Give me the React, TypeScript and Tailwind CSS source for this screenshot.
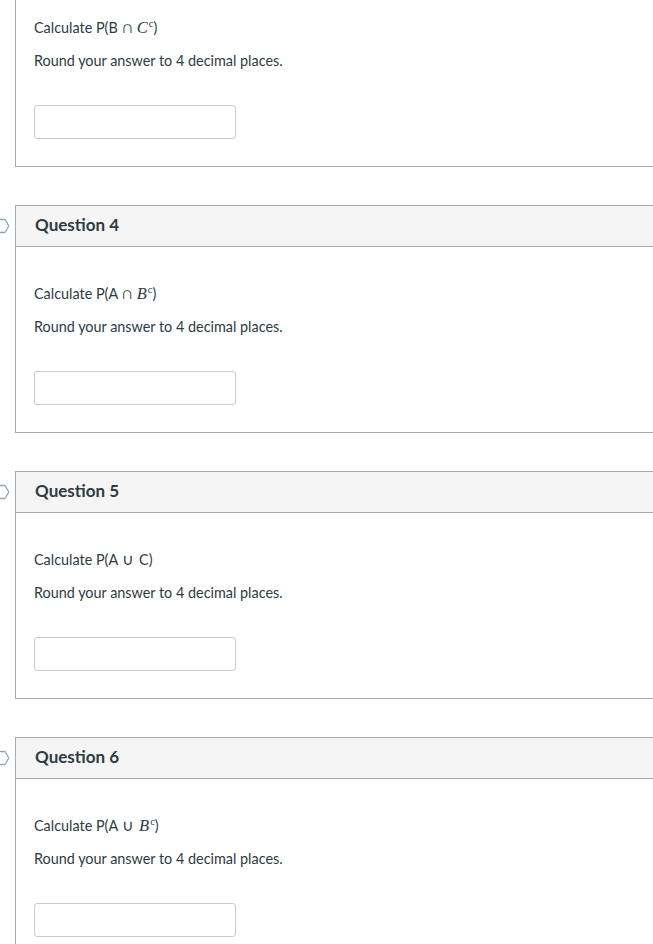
const questions = [
  { num: null, set: "B", op: "∩", sym: "C", sup: "c" },
  { num: 4, set: "A", op: "∩", sym: "B", sup: "c" },
  { num: 5, set: "A", op: "∪", sym: "C", sup: null },
  { num: 6, set: "A", op: "∪", sym: "B", sup: "c" },
];

function FlagIcon() {
  return (
    <svg
      className="absolute left-[-15px] top-[12px] h-[16px] w-[9px] overflow-visible"
      viewBox="0 0 9 16"
      fill="none"
    >
      <path
        d="M-6 1.5 H3.5 Q4.2 1.5 4.6 2.2 L7.4 7.3 Q7.8 8 7.4 8.7 L4.6 13.8 Q4.2 14.5 3.5 14.5 H-6"
        stroke="#89a7c3"
        strokeWidth="1.3"
      />
    </svg>
  );
}

function Expression({ q }: { q: (typeof questions)[number] }) {
  return (
    <p className="h-5 leading-5">
      Calculate P({q.set}{" "}
      <span className="text-[16px] leading-[0] mx-[1px]">{q.op}</span>{" "}
      {q.sup ? (
        <span className="font-['Liberation_Serif',serif] italic text-[16.5px] leading-[0]">
          {q.sym}
          <sup className="not-italic text-[10.5px] top-[-0.6em] ml-[1px]">{q.sup}</sup>
        </span>
      ) : (
        <span>{q.sym}</span>
      )}
      )
    </p>
  );
}

export default function App() {
  return (
    <div className="w-[653px] h-[944px] overflow-hidden bg-white font-['Lato',sans-serif] text-[14.4px] text-[#2d3b45]">
      <div className="mt-[-20px] ml-[15px] mr-[-40px] flex flex-col gap-[38px]">
        {questions.map((q, i) => (
          <div key={i} className="relative border border-[#aaaaaa]">
            {q.num !== null && (
              <div className="relative h-[41px] bg-[#f5f5f5] border-b border-[#aaaaaa] px-[19px] flex items-center">
                <FlagIcon />
                <h2 className="text-[17px] font-bold leading-none pb-[4px]">Question {q.num}</h2>
              </div>
            )}
            <div className="pt-[37px] pb-[27px] px-[18px]">
              <Expression q={q} />
              <p className="mt-[13px] leading-5">Round your answer to 4 decimal places.</p>
              <input
                type="text"
                className="mt-[34px] block w-[202px] h-[34px] rounded-[3px] border border-[#c7cdd1] bg-white"
              />
            </div>
          </div>
        ))}
      </div>
    </div>
  );
}
